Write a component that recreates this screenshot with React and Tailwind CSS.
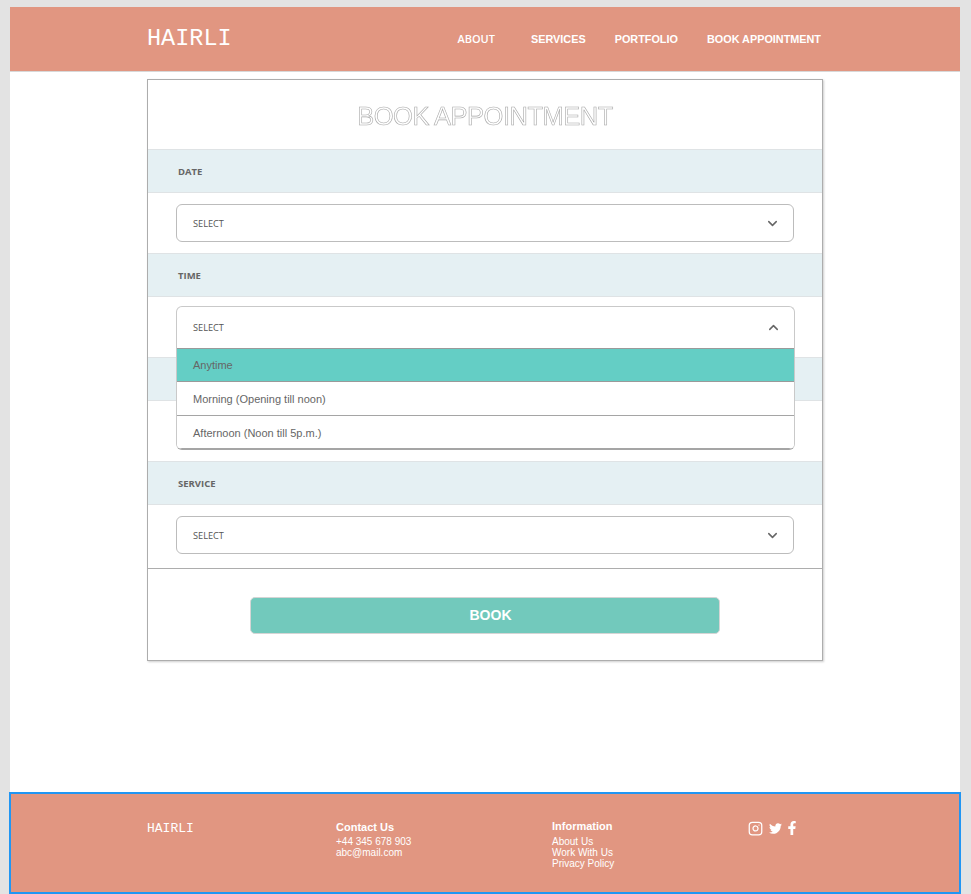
import React from 'react';
import { ChevronDown, ChevronUp, Instagram } from 'lucide-react';
import { FaTwitter, FaFacebookF } from 'react-icons/fa';

const Select = () => (
    <div className="h-[38px] rounded-[6px] border border-[#bcbcbc] bg-white pl-[16px] pr-[13px] flex items-center justify-between">
        <span className="pt-px font-['Open_Sans',sans-serif] text-[9.2px] text-[#555]">SELECT</span>
        <ChevronDown size={15} strokeWidth={2.4} className="text-[#666]" />
    </div>
);

const Section = ({ label, rowHeight = 'h-[60px]', children }) => (
    <div>
        <div className="h-[44px] bg-[#e5f0f3] border-y border-[#dfe3e5] pl-[30px] pt-[2px] flex items-center">
            <span className="font-['Open_Sans',sans-serif] text-[9.5px] font-bold text-[#666]">{label}</span>
        </div>
        <div className={`${rowHeight} px-[28px] pt-[11px]`}>{children}</div>
    </div>
);

const options = [
    { text: 'Anytime', cls: 'bg-[#64cec5] h-[34px] pt-px border-y border-[#9a9a9a]' },
    { text: 'Morning (Opening till noon)', cls: 'bg-white h-[33px] pt-px' },
    { text: 'Afternoon (Noon till 5p.m.)', cls: 'bg-white h-[34px] pt-[2px] border-y border-[#a5a5a5]' },
];

export default function App() {
    return (
        <div className="h-[894px] bg-[#e3e3e3] pt-[7px] pl-[10px] pr-[11px] font-['Liberation_Sans',sans-serif] overflow-hidden">
            <div className="h-[887px] bg-white flex flex-col">
                <header className="h-[65px] shrink-0 bg-[#e19681] border-b border-[#d8d8d8] pl-[137px] pr-[139px] flex items-center justify-between text-white">
                    <span className="font-['Liberation_Mono',monospace] text-[23.5px] -mt-[1px]">HAIRLI</span>
                    <nav className="flex gap-[29px] text-[10.85px] font-bold">
                        <a className="mr-[7px] font-['Open_Sans',sans-serif] text-[11px] font-semibold">ABOUT</a>
                        <a>SERVICES</a>
                        <a>PORTFOLIO</a>
                        <a>BOOK APPOINTMENT</a>
                    </nav>
                </header>

                <main className="flex-1 pt-[7px]">
                    <div className="relative ml-[137px] w-[676px] h-[582px] border border-[#adadad] bg-white shadow-[1px_1px_2px_rgba(0,0,0,0.2)]">
                        <h1 className="h-[69px] pt-[3px] flex items-center justify-center text-[25.5px] tracking-[-0.5px] text-white [-webkit-text-stroke:0.6px_#a9a9a9] will-change-transform">
                            BOOK APPOINTMENT
                        </h1>

                        <Section label="DATE"><Select /></Section>
                        <Section label="TIME"><Select /></Section>
                        {/* this one sits fully under the open dropdown */}
                        <Section label="" />
                        <Section label="SERVICE" rowHeight="h-[63px]"><Select /></Section>

                        <div className="border-t border-[#adadad] pt-[28px] pl-[102px]">
                            <button className="w-[470px] h-[37px] rounded-[5px] bg-[#72c9bc] border border-[#d5d5d5] text-white text-[14px] font-bold pl-[11px]">
                                BOOK
                            </button>
                        </div>

                        {/* open dropdown of the time field */}
                        <div className="absolute left-[28px] top-[226px] w-[619px] rounded-[6px] border border-[#c9c9c9] border-b-[#a5a5a5] bg-white overflow-hidden">
                            <div className="h-[41px] pl-[16px] pr-[13px] flex items-center justify-between">
                                <span className="font-['Open_Sans',sans-serif] text-[9.2px] text-[#555]">SELECT</span>
                                <ChevronUp size={15} strokeWidth={2.4} className="text-[#666]" />
                            </div>
                            {options.map((o) => (
                                <div key={o.text} className={`${o.cls} pl-[16px] flex items-center text-[11px] text-[#666]`}>
                                    {o.text}
                                </div>
                            ))}
                        </div>
                    </div>
                </main>

                <footer className="h-[102px] shrink-0 -mx-px bg-[#e19681] border-2 border-[#2196f3] text-white flex pl-[136px] pt-[27px]">
                    <div className="w-[189px] font-['Liberation_Mono',monospace] text-[13px] leading-[18px] -mt-[1px]">HAIRLI</div>
                    <div className="w-[216px] text-[10px] leading-[11px]">
                        <div className="text-[11px] font-bold leading-[13px] mb-[2px]">Contact Us</div>
                        <div>+44 345 678 903</div>
                        <div>abc@mail.com</div>
                    </div>
                    <div className="w-[196px] text-[10px] leading-[11px] -mt-[1px]">
                        <div className="text-[11px] font-bold leading-[13px] mb-[3px]">Information</div>
                        <div>About Us</div>
                        <div>Work With Us</div>
                        <div>Privacy Policy</div>
                    </div>
                    <div className="flex items-start gap-[6px]">
                        <Instagram size={15} strokeWidth={2} />
                        <FaTwitter size={13} className="mt-px" />
                        <FaFacebookF size={14} className="-ml-[3px]" />
                    </div>
                </footer>
            </div>
        </div>
    );
}
